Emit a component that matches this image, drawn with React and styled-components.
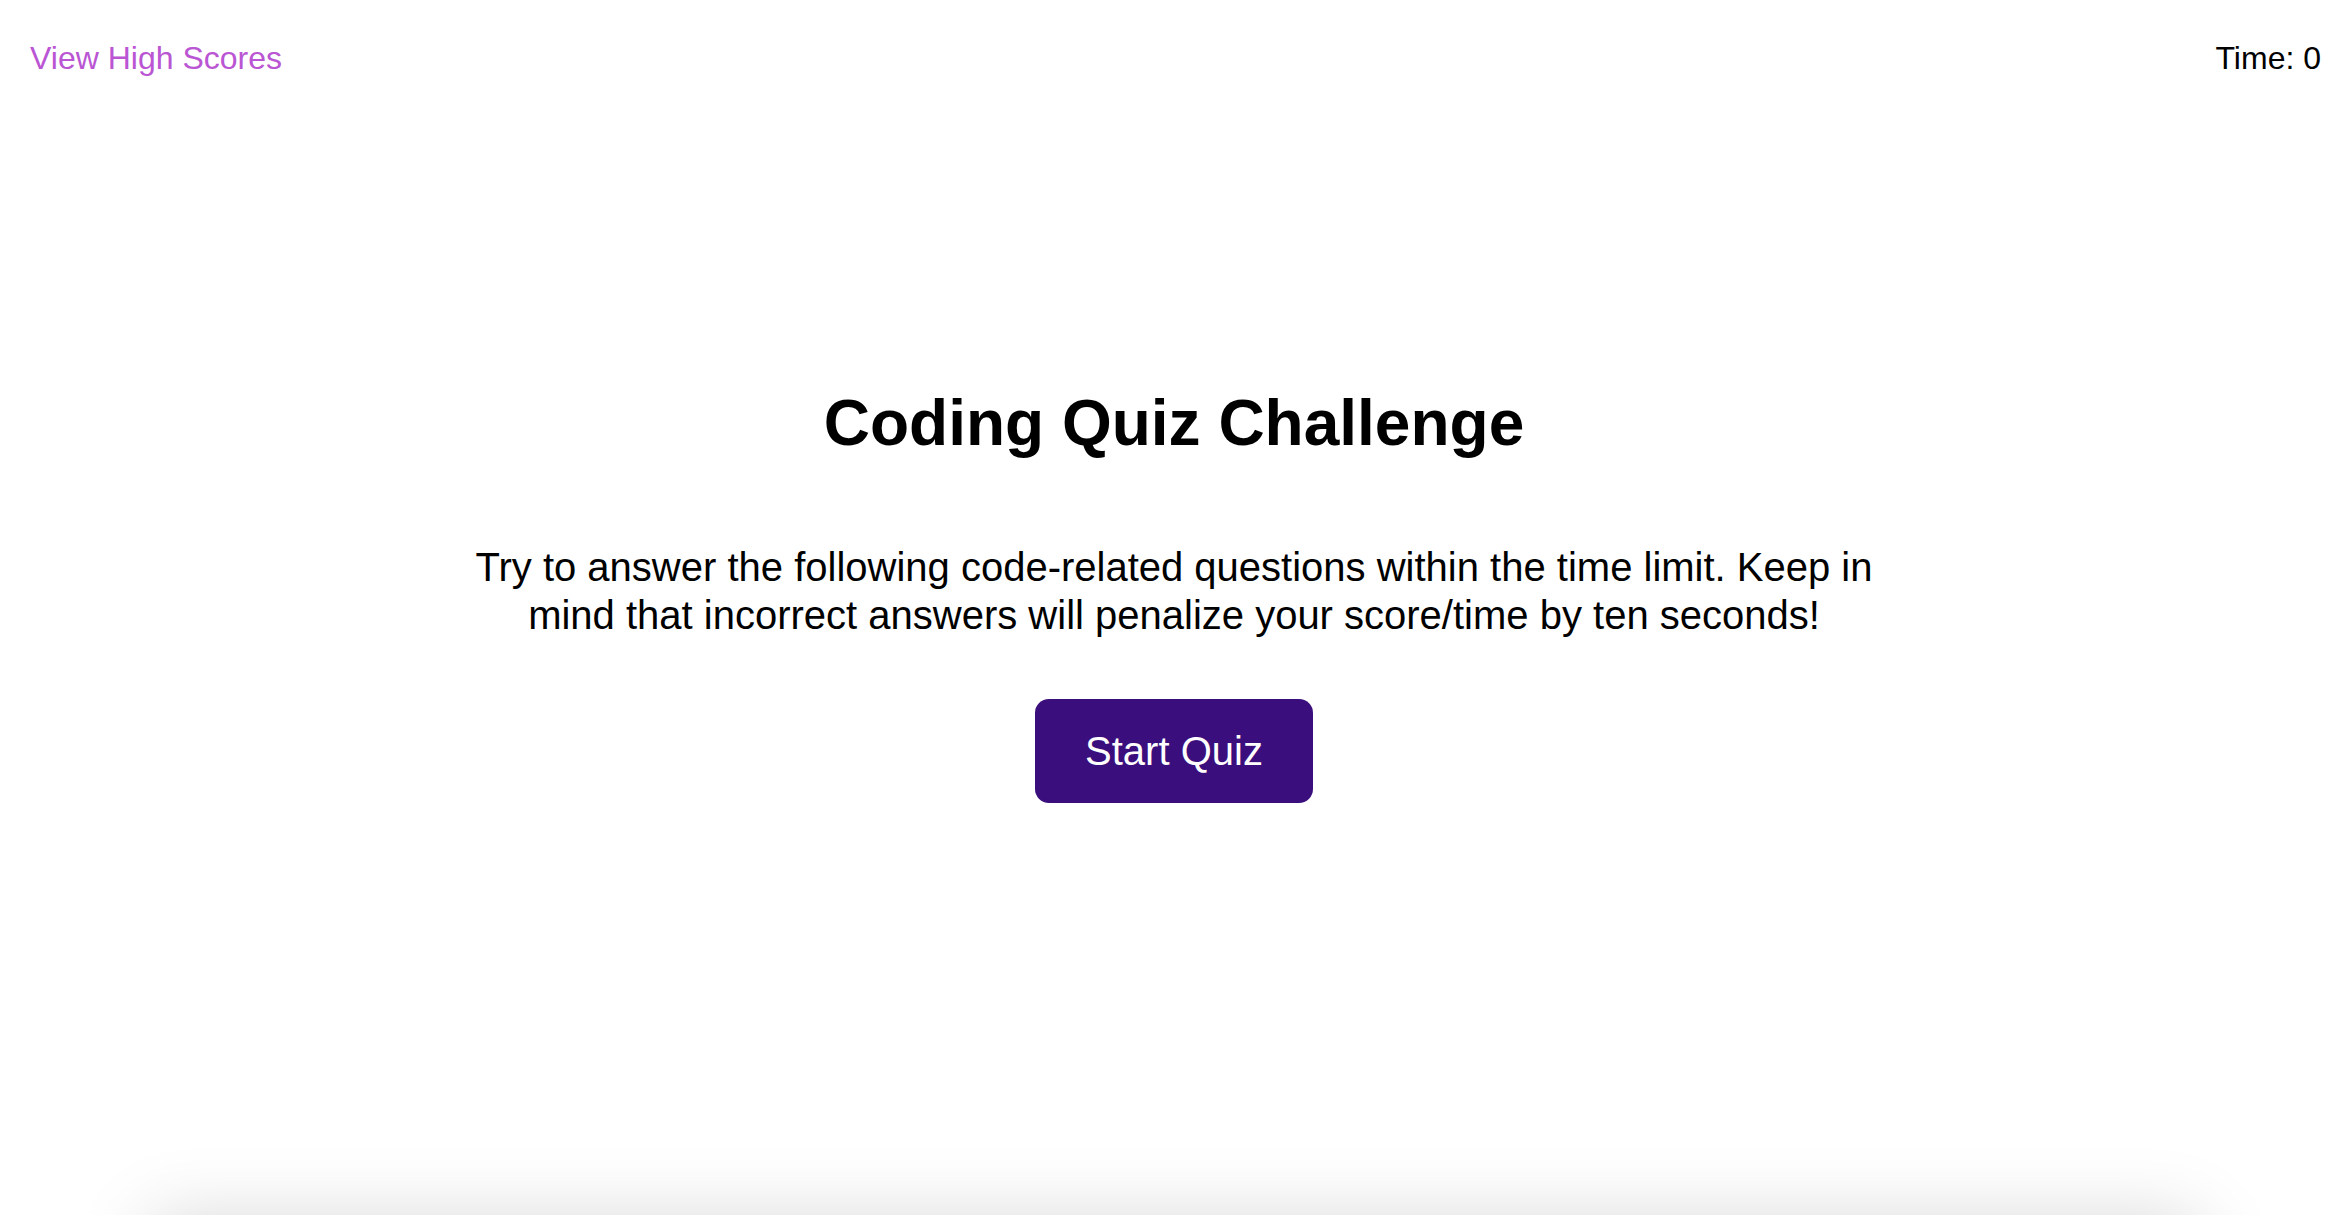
import React from "react";
import styled, { createGlobalStyle } from "styled-components";

const GlobalStyle = createGlobalStyle`
  html, body {
    margin: 0;
    padding: 0;
    background: #ffffff;
  }
  body {
    font-family: "Liberation Sans", Arial, Helvetica, sans-serif;
    color: #000000;
  }
  * { box-sizing: border-box; }
`;

const Screen = styled.div`
  height: 100vh;
  display: flex;
  flex-direction: column;
`;

const Header = styled.header`
  display: flex;
  justify-content: space-between;
  align-items: flex-start;
  padding: 40px 27px 0 30px;
  font-size: 32px;
  line-height: normal;
`;

const ScoresLink = styled.a`
  color: #ba55d3;
  text-decoration: none;
  cursor: pointer;
`;

const Timer = styled.div`
  color: #000000;
`;

const Main = styled.main`
  display: flex;
  flex-direction: column;
  align-items: center;
  padding-top: 309px;
`;

const Title = styled.h1`
  margin: 0;
  font-size: 64px;
  font-weight: 700;
  line-height: normal;
  text-align: center;
`;

const Intro = styled.p`
  margin: 83px 0 0;
  max-width: 1420px;
  font-size: 40px;
  line-height: 48px;
  text-align: center;
`;

const StartButton = styled.button`
  margin-top: 59.5px;
  padding: 29px 50px;
  border: none;
  border-radius: 14px;
  background: #3a0e7d;
  color: #ffffff;
  font-family: inherit;
  font-size: 40px;
  line-height: 46px;
  cursor: pointer;
`;

const Card = styled.section`
  margin: 6px 150px 40px;
  height: 240px;
  background: #ffffff;
  box-shadow: 0 0 70px rgba(0, 0, 0, 0.17);
`;

export default function App() {
  return (
    <>
      <GlobalStyle />
      <Screen>
        <Header>
          <ScoresLink>View High Scores</ScoresLink>
          <Timer>Time: 0</Timer>
        </Header>
        <Main>
          <Title>Coding Quiz Challenge</Title>
          <Intro>
            Try to answer the following code-related questions within the time
            limit. Keep in mind that incorrect answers will penalize your
            score/time by ten seconds!
          </Intro>
          <StartButton>Start Quiz</StartButton>
        </Main>
      </Screen>
      <Card />
    </>
  );
}
